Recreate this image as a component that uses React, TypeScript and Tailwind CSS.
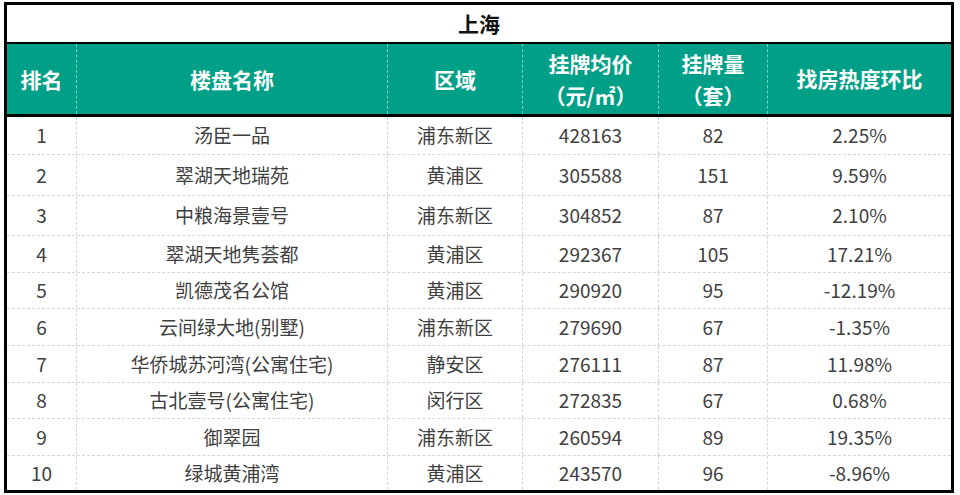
import React from "react";

type Row = {
  rank: number;
  name: string;
  area: string;
  price: string;
  count: number;
  change: string;
  h: string;
};

const rows: Row[] = [
  { rank: 1, name: "汤臣一品", area: "浦东新区", price: "428163", count: 82, change: "2.25%", h: "h-[38px]" },
  { rank: 2, name: "翠湖天地瑞苑", area: "黄浦区", price: "305588", count: 151, change: "9.59%", h: "h-[41px]" },
  { rank: 3, name: "中粮海景壹号", area: "浦东新区", price: "304852", count: 87, change: "2.10%", h: "h-[40px]" },
  { rank: 4, name: "翠湖天地隽荟都", area: "黄浦区", price: "292367", count: 105, change: "17.21%", h: "h-[37px]" },
  { rank: 5, name: "凯德茂名公馆", area: "黄浦区", price: "290920", count: 95, change: "-12.19%", h: "h-[36px]" },
  { rank: 6, name: "云间绿大地(别墅)", area: "浦东新区", price: "279690", count: 67, change: "-1.35%", h: "h-[37px]" },
  { rank: 7, name: "华侨城苏河湾(公寓住宅)", area: "静安区", price: "276111", count: 87, change: "11.98%", h: "h-[37px]" },
  { rank: 8, name: "古北壹号(公寓住宅)", area: "闵行区", price: "272835", count: 67, change: "0.68%", h: "h-[36px]" },
  { rank: 9, name: "御翠园", area: "浦东新区", price: "260594", count: 89, change: "19.35%", h: "h-[37px]" },
  { rank: 10, name: "绿城黄浦湾", area: "黄浦区", price: "243570", count: 96, change: "-8.96%", h: "h-[34px]" },
];

const font = "font-['Noto_Sans_CJK_SC','Noto_Sans',sans-serif]";
const cell = "flex items-center justify-center border-r border-dashed border-[#d6d6d6]";
const head = "flex flex-col items-center justify-center border-r border-dashed border-[#7fcfc2] leading-[32px]";

export default function App() {
  return (
    <div className={`bg-white w-[960px] h-[495px] pt-[2px] pl-[4px] ${font}`}>
      <div className="w-[950px] border-[3px] border-black">
        <div className="h-[39px] border-b-2 border-black flex items-center justify-center text-[21px] font-bold text-[#111]">
          上海
        </div>
        <div className="h-[73px] border-b-[3px] border-black bg-[#00a088] flex text-white font-bold text-[21px]">
          <div className={`${head} w-[70px]`}>排名</div>
          <div className={`${head} w-[311px]`}>楼盘名称</div>
          <div className={`${head} w-[135px]`}>区域</div>
          <div className={`${head} w-[136px]`}>
            <span>挂牌均价</span>
            <span>（元/㎡）</span>
          </div>
          <div className={`${head} w-[109px]`}>
            <span>挂牌量</span>
            <span>（套）</span>
          </div>
          <div className="flex-1 flex items-center justify-center">找房热度环比</div>
        </div>
        {rows.map((r, i) => (
          <div
            key={r.rank}
            className={`flex text-[19px] text-[#404040] ${r.h} ${
              i < rows.length - 1 ? "border-b border-dashed border-[#d6d6d6]" : ""
            }`}
          >
            <div className={`${cell} w-[70px]`}>{r.rank}</div>
            <div className={`${cell} w-[311px]`}>{r.name}</div>
            <div className={`${cell} w-[135px]`}>{r.area}</div>
            <div className={`${cell} w-[136px]`}>{r.price}</div>
            <div className={`${cell} w-[109px]`}>{r.count}</div>
            <div className="flex-1 flex items-center justify-center">{r.change}</div>
          </div>
        ))}
      </div>
    </div>
  );
}
